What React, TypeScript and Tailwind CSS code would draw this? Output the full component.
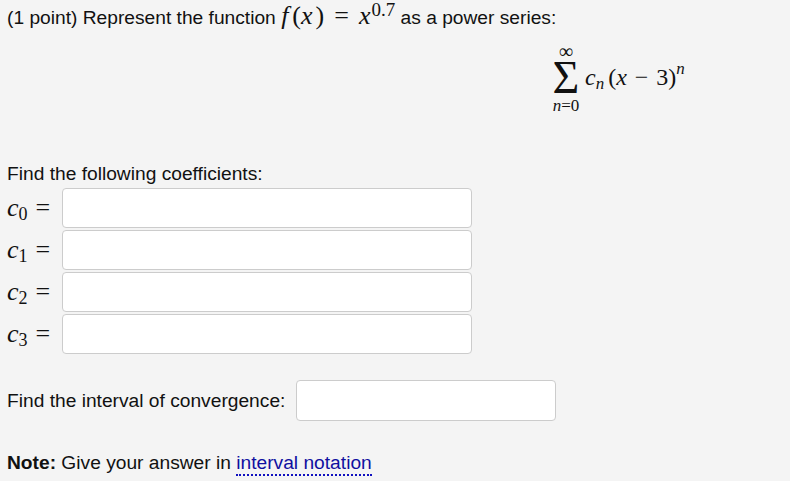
import React from "react";

const M = "font-['Liberation_Serif','Times_New_Roman',serif]";

function Coef({ i }: { i: number }) {
  return (
    <div className="flex items-center h-[40px] mb-[2px]">
      <div className={`${M} w-[55px] flex items-baseline text-[26px] leading-none`}>
        <span className="italic">c</span>
        <span className="text-[18px] relative top-[4px]">{i}</span>
        <span className="ml-[8px] text-[26px]">=</span>
      </div>
      <div className="w-[410px] h-[40px] bg-white border border-[#cccccc] rounded-[4px]" />
    </div>
  );
}

export default function App() {
  return (
    <div className="min-h-[481px] w-[790px] bg-[#f4f4f4] text-[19.2px] text-[#111111] font-['Liberation_Sans',Arial,sans-serif] pl-[7px] pt-[3px]">
      <div className="leading-[28px] flex items-baseline">
        <span>(1 point) Represent the function&nbsp;</span>
        <span className={`${M} text-[26px] leading-none whitespace-nowrap`}>
          <span className="italic">f</span>
          <span className="ml-[4px]">(</span>
          <span className="italic">x</span>
          <span className="ml-[3px]">)</span>
          <span className="mx-[10px]">=</span>
          <span className="italic">x</span>
          <span className="text-[19px] ml-[1px] relative top-[-8px]">0.7</span>
        </span>
        <span>&nbsp;as a power series:</span>
      </div>

      <div className={`${M} ml-[542px] mt-[13px] flex items-start leading-none`}>
        <div className="flex flex-col items-center w-[34px]">
          <span className="text-[20px] h-[12px] leading-[12px]">∞</span>
          <span className="text-[46px] h-[38px] leading-[42px]">Σ</span>
          <span className="text-[17px] h-[18px] leading-[18px] mt-[2px] whitespace-nowrap">
            <span className="italic">n</span>=0
          </span>
        </div>
        <div className="flex items-baseline text-[24px] mt-[20px] ml-[2px]">
          <span className="italic">c</span>
          <span className="italic text-[17px] relative top-[4px]">n</span>
          <span className="ml-[4px]">(</span>
          <span className="italic">x</span>
          <span className="mx-[8px]">−</span>
          <span>3</span>
          <span>)</span>
          <span className="italic text-[17px] relative top-[-11px]">n</span>
        </div>
      </div>

      <div className="leading-[28px] mt-[45px]">Find the following coefficients:</div>
      <div>
        <Coef i={0} />
        <Coef i={1} />
        <Coef i={2} />
        <Coef i={3} />
      </div>

      <div className="flex items-center mt-[26px]">
        <span className="leading-[28px]">Find the interval of convergence:</span>
        <div className="ml-[11px] w-[260px] h-[41px] bg-white border border-[#cccccc] rounded-[4px]" />
      </div>

      <div className="leading-[28px] mt-[28px]">
        <b>Note:</b> Give your answer in{" "}
        <span className="text-[#1010a0] border-b-2 border-dotted border-[#1010c0] pb-[1px]">interval notation</span>
      </div>
    </div>
  );
}
